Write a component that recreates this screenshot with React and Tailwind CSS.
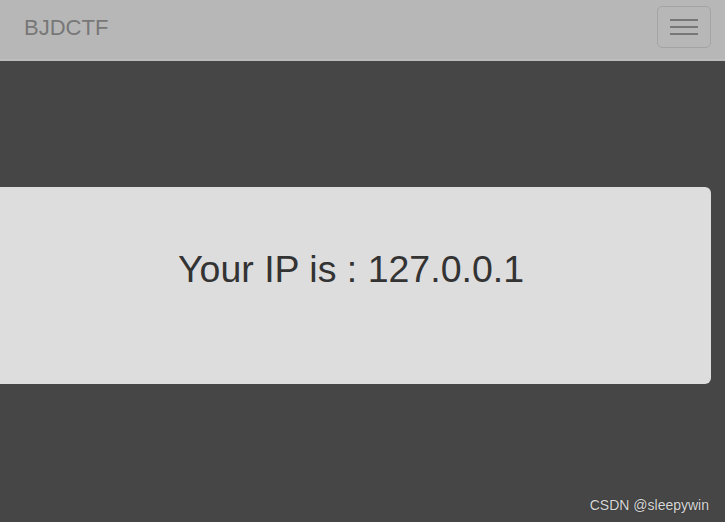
export default function App() {
  return (
    <div className="relative w-[725px] h-[522px] overflow-hidden bg-[#464646]" style={{ fontFamily: '"Liberation Sans", Arial, sans-serif' }}>
      <nav className="h-[61px] bg-[#b7b7b7] border-b-2 border-[#bcbcbc] flex items-center justify-between pl-[24px] pr-[14px]">
        <span className="text-[22px] text-[#777777] leading-none mt-[-4px]">BJDCTF</span>
        <button className="w-[54px] h-[42px] mt-[-5px] rounded-[5px] border border-[#a4a4a4] flex flex-col items-center justify-center gap-[5px]">
          <span className="block w-[28px] h-[2px] bg-[#777777]" />
          <span className="block w-[28px] h-[2px] bg-[#777777]" />
          <span className="block w-[28px] h-[2px] bg-[#777777]" />
        </button>
      </nav>
      <div className="pt-[126px]">
        <div className="ml-[-9px] w-[720px] h-[197px] bg-[#dddddd] rounded-[6px] flex justify-center pt-[64px]">
          <span className="text-[37.5px] text-[#333333] leading-none">Your IP is : 127.0.0.1</span>
        </div>
      </div>
      <div className="absolute right-[16px] bottom-[10px] text-[14px] text-[#d8d8d8] leading-none" style={{ textShadow: '0 0 1px #222' }}>CSDN @sleepywin</div>
    </div>
  );
}
